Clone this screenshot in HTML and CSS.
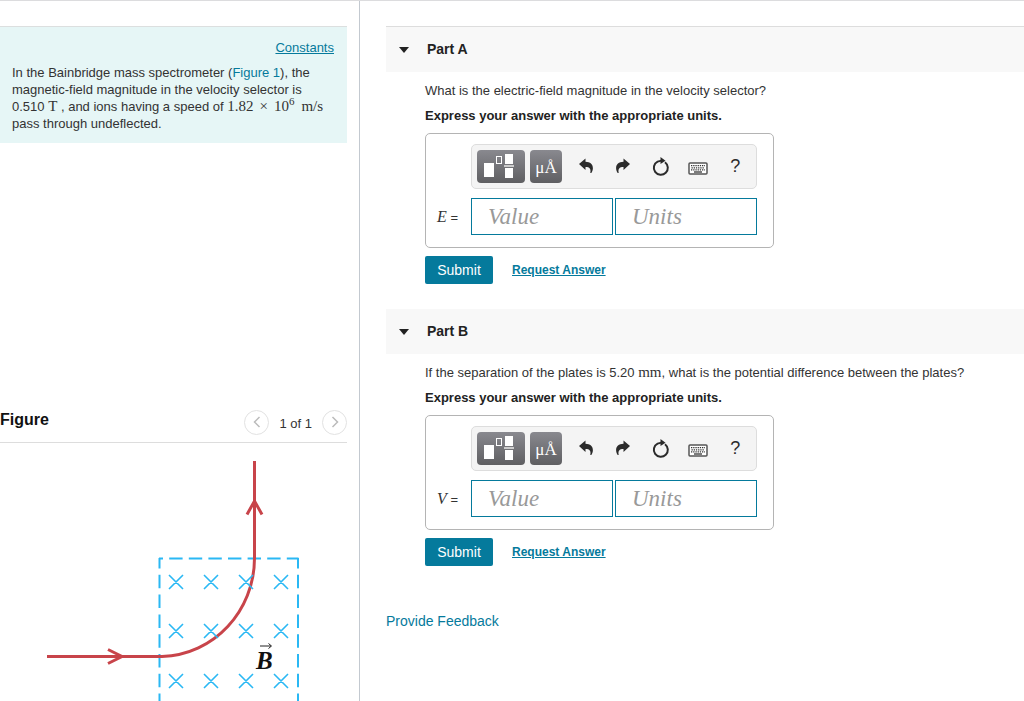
FILE: index.html
```html
<!DOCTYPE html>
<html lang="en">
<head>
<meta charset="utf-8" />
<title>Bainbridge mass spectrometer</title>
<link rel="stylesheet" href="styles.css">
</head>

<body>
<!-- shared toolbar icons -->
<svg class="sprite" aria-hidden="true">
    <symbol id="i-template" viewBox="0 0 48 33">
        <rect x="7" y="13" width="10" height="14" fill="#fff" />
        <rect x="19.500" y="6.500" width="5" height="7" fill="none" stroke="#fff" />
        <rect x="28" y="4" width="8" height="10" fill="#fff" />
        <rect x="27" y="15" width="10" height="2" fill="#ccc" />
        <rect x="28" y="18" width="8" height="10" fill="#fff" />
    </symbol>
    <symbol id="i-undo" viewBox="0 0 16 18">
        <path d="M1 6 7.500 .5v3.200c4.700 .2 7.500 2.600 7.400 6.500 0 1.800-.7 3.400-1.600 4.800h-1c.8-4.200-.6-5.900-4.800-5.900v3z" />
    </symbol>
    <symbol id="i-reset" viewBox="0 0 18 20">
        <path d="M13 5.200A7 7 0 1 1 5.600 4.600L9.500 3.600" fill="none" stroke="#2b2b2b" stroke-width="2" />
        <path d="M8.500 0l5 3.800-5 3.200z" />
    </symbol>
    <symbol id="i-keyboard" viewBox="0 0 20 16">
        <rect x="1" y="4" width="18" height="11" rx="1" fill="#fff" stroke="#555" stroke-width="1.500" />
        <path d="M3 6.700h14M3.500 8.800h13M3 10.900h14" fill="none" stroke="#333" stroke-width="1.300" stroke-dasharray="1.300 .9" />
        <path d="M6 13h8" stroke="#333" stroke-width="1.300" />
    </symbol>
</svg>

<div class="page">
    <aside class="side">
        <div class="problem">
            <div class="constants"><a href="#">Constants</a></div>
            <p>In the Bainbridge mass spectrometer (<a href="#figure">Figure 1</a>), the magnetic-field magnitude in the velocity selector is 0.510 <span class="math">T</span> , and ions having a speed of <span class="math">1.82<span class="times">×</span>10<sup>6</sup><span class="unit">m/s</span></span> pass through undeflected.</p>
        </div>
        <section class="figure" id="figure">
            <div class="figure-head">
                <h2>Figure</h2>
                <div class="pager">
                    <button type="button" aria-label="Previous figure"><svg width="8" height="12" viewBox="0 0 8 12"><path d="M6.500 1 1.500 6l5 5" /></svg></button>
                    <span>1 of 1</span>
                    <button type="button" aria-label="Next figure"><svg width="8" height="12" viewBox="0 0 8 12"><path d="M1.500 1l5 5-5 5" /></svg></button>
                </div>
            </div>
            <svg class="diagram" viewBox="0 0 347 300">
                <!-- field region -->
                <g class="field">
                    <path d="M159 115.500h139.500" stroke-dasharray="13.400 6.200" stroke-dashoffset="9.400" />
                    <path d="M159.500 115v170" stroke-dasharray="13.500 6.300" stroke-dashoffset="3" />
                    <path d="M298 115v170" stroke-dasharray="13.500 6.300" stroke-dashoffset="3" />
                </g>
                <path class="beam" d="M47 213.500H162C214 212 254.500 168 254.500 115V18" />
                <path class="beam" d="M108 206.500 122 213.500 108 220.500M247 71.500 254.500 58 262 71.500" />
                <g class="cross">
                    <path d="M169 132L183 146M183 132L169 146M204 132L218 146M218 132L204 146M239 132L253 146M253 132L239 146M274 132L288 146M288 132L274 146" />
                    <path d="M169 181L183 195M183 181L169 195M204 181L218 195M218 181L204 195M239 181L253 195M253 181L239 195M274 181L288 195M288 181L274 195" />
                    <path d="M169 231L183 245M183 231L169 245M204 231L218 245M218 231L204 245M239 231L253 245M253 231L239 245M274 231L288 245M288 231L274 245" />
                </g>
                <text class="vector" x="256" y="226">B</text>
                <path d="M260 203h11M268.500 200.500l3 2.500-3 2.500" fill="none" stroke="#222" />
            </svg>
        </section>
    </aside>

    <main class="main">
        <section class="part first">
            <h2 class="part-head"><span class="arrow"></span>Part A</h2>
            <form class="part-body" action="#">
                <p>What is the electric-field magnitude in the velocity selector?</p>
                <p class="hint">Express your answer with the appropriate units.</p>
                <div class="answer">
                    <div class="toolbar">
                        <button class="dark wide" type="button" aria-label="Templates"><svg width="48" height="33"><use href="#i-template" /></svg></button>
                        <button class="dark" type="button">μÅ</button>
                        <button class="tool" type="button" aria-label="Undo"><svg width="16" height="18"><use href="#i-undo" /></svg></button>
                        <button class="tool redo" type="button" aria-label="Redo"><svg width="16" height="18"><use href="#i-undo" /></svg></button>
                        <button class="tool" type="button" aria-label="Reset"><svg width="18" height="20"><use href="#i-reset" /></svg></button>
                        <button class="tool" type="button" aria-label="Keyboard"><svg width="20" height="16"><use href="#i-keyboard" /></svg></button>
                        <button class="tool" type="button">?</button>
                    </div>
                    <label for="e-value"><i>E</i> =</label>
                    <div class="fields">
                        <input id="e-value" type="text" placeholder="Value" />
                        <input id="e-units" type="text" placeholder="Units" aria-label="Units" />
                    </div>
                </div>
                <div class="actions">
                    <button class="submit" type="submit">Submit</button>
                    <a href="#">Request Answer</a>
                </div>
            </form>
        </section>

        <section class="part">
            <h2 class="part-head"><span class="arrow"></span>Part B</h2>
            <form class="part-body" action="#">
                <p>If the separation of the plates is 5.20 <span class="math">mm</span>, what is the potential difference between the plates?</p>
                <p class="hint">Express your answer with the appropriate units.</p>
                <div class="answer">
                    <div class="toolbar">
                        <button class="dark wide" type="button" aria-label="Templates"><svg width="48" height="33"><use href="#i-template" /></svg></button>
                        <button class="dark" type="button">μÅ</button>
                        <button class="tool" type="button" aria-label="Undo"><svg width="16" height="18"><use href="#i-undo" /></svg></button>
                        <button class="tool redo" type="button" aria-label="Redo"><svg width="16" height="18"><use href="#i-undo" /></svg></button>
                        <button class="tool" type="button" aria-label="Reset"><svg width="18" height="20"><use href="#i-reset" /></svg></button>
                        <button class="tool" type="button" aria-label="Keyboard"><svg width="20" height="16"><use href="#i-keyboard" /></svg></button>
                        <button class="tool" type="button">?</button>
                    </div>
                    <label for="v-value"><i>V</i> =</label>
                    <div class="fields">
                        <input id="v-value" type="text" placeholder="Value" />
                        <input id="v-units" type="text" placeholder="Units" aria-label="Units" />
                    </div>
                </div>
                <div class="actions">
                    <button class="submit" type="submit">Submit</button>
                    <a href="#">Request Answer</a>
                </div>
            </form>
        </section>

        <a class="feedback" href="#">Provide Feedback</a>
    </main>
</div>
</body>
</html>
```

FILE: styles.css
```css
* {
    box-sizing:border-box;
}
body {
    margin:0;
    background:#fff;
    color:#333;
    font:13px/17px "Liberation Sans", Arial, sans-serif;
}
h2, p {
    margin:0;
}
a {
    color:#057a9c;
    text-decoration:none;
}
button {
    margin:0;
    padding:0;
    border:0;
    font-family:inherit;
    cursor:pointer;
}
.sprite {
    display:none;
}
.page {
    display:grid;
    grid-template-columns:45fr 83fr;
    height:100vh;
    border-top:1px solid #dcdcde;
    overflow:hidden;
}
.math {
    font-family:"Liberation Serif", "Times New Roman", serif;
    font-size:15px;
    line-height:16px;
    white-space:nowrap;
}
.math sup {
    font-size:11px;
    line-height:0;
}
.times {
    margin:0 6px;
}
.unit {
    margin-left:7px;
}

/* left column */
.side {
    display:flex;
    flex-direction:column;
    min-width:0;
    padding:25px 12px 0 0;
    border-right:1px solid #c3c9d0;
    overflow:hidden;
}
.problem {
    padding:12px 13px 11px 12px;
    border-top:1px solid #dcdfdf;
    background:#e6f6f6;
}
.constants {
    margin-bottom:8px;
    text-align:right;
}
.constants a {
    text-decoration:underline;
}
.figure {
    flex:0 0 43vh;
    margin-top:auto;
    overflow:hidden;
}
.figure-head {
    display:flex;
    justify-content:space-between;
    padding:10px 0 7px;
    border-bottom:1px solid #ddd;
}
.figure-head h2 {
    color:#111;
    font-size:16px;
    line-height:20px;
}
.pager {
    display:flex;
    align-items:center;
    gap:10px;
}
.pager span {
    padding-top:2px;
}
.pager button {
    display:flex;
    align-items:center;
    justify-content:center;
    width:25px;
    height:25px;
    border:1px solid #e2e2e2;
    border-radius:50%;
    background:#fff;
}
.pager path {
    fill:none;
    stroke:#bbb;
    stroke-width:1.5;
}
.diagram {
    display:block;
    width:100%;
}
.field path {
    fill:none;
    stroke:#2ab8f4;
    stroke-width:2;
}
.cross path {
    fill:none;
    stroke:#2ab8f4;
    stroke-width:1.6;
}
.beam {
    fill:none;
    stroke:#c8444a;
    stroke-width:3;
}
.vector {
    fill:#111;
    font:italic bold 25px "Liberation Serif", serif;
}

/* right column */
.main {
    min-width:0;
    padding:25px 0 0 26px;
    overflow:hidden;
}
.part {
    margin-bottom:25px;
}
.first .part-head {
    border-top:1px solid #ddd;
}
.part-head {
    display:flex;
    align-items:center;
    padding:14px 13px;
    background:#f8f8f8;
    color:#222;
    font-size:14px;
    line-height:17px;
}
.arrow {
    margin-right:18px;
    border:5px solid transparent;
    border-top:6px solid #222;
    border-bottom:0;
}
.part-body {
    padding:10px 0 0 39px;
}
.hint {
    margin:8px 0 9px;
    color:#222;
    font-weight:bold;
}
.answer {
    display:grid;
    grid-template-columns:34px 286px;
    align-items:center;
    row-gap:9px;
    width:349px;
    padding:10px 15px 12px 11px;
    border:1px solid #b4b4b4;
    border-radius:5px;
}
.toolbar {
    grid-column:2;
    display:flex;
    padding:5px 2px 5px 5px;
    border:1px solid #ddd;
    border-radius:5px;
    background:#f4f4f4;
}
.dark {
    flex:none;
    width:32px;
    height:33px;
    margin-right:5px;
    border-radius:4px;
    background:linear-gradient(#89898f, #5f5f62);
    color:#fff;
    font:17px/36px "Liberation Serif", serif;
}
.wide {
    width:48px;
}
.wide svg {
    display:block;
}
.tool {
    display:flex;
    align-items:center;
    justify-content:center;
    flex:1;
    height:33px;
    background:none;
    color:#2b2b2b;
    font-size:18px;
}
.tool svg {
    fill:#2b2b2b;
}
.redo svg {
    transform:scaleX(-1);
}
.answer label i {
    font:italic 16px "Liberation Serif", serif;
}
.fields {
    display:flex;
    gap:2px;
}
.fields input {
    flex:1;
    min-width:0;
    height:37px;
    padding:0 16px;
    border:1px solid #057a9c;
    background:#fff;
    color:#333;
    font:italic 23px "Liberation Serif", serif;
}
.fields input::placeholder {
    color:#999;
}
.actions {
    display:flex;
    align-items:center;
    gap:19px;
    margin-top:8px;
}
.submit {
    width:68px;
    height:28px;
    border-radius:2px;
    background:#057a9c;
    color:#fff;
    font-size:14px;
}
.actions a {
    font-size:12px;
    font-weight:bold;
    text-decoration:underline;
}
.feedback {
    display:inline-block;
    margin-top:22px;
    font-size:14px;
}
```
